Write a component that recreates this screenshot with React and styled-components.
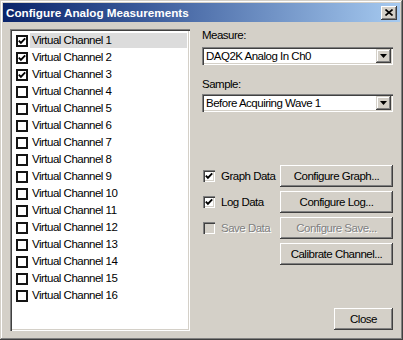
import React from 'react';
import styled, { createGlobalStyle } from 'styled-components';

const Global = createGlobalStyle`
  html, body { margin: 0; padding: 0; background: #d4d0c8; }
  body {
    font-family: "Liberation Sans", Arial, sans-serif;
    font-size: 11.5px;
    letter-spacing: -0.5px;
    color: #000;
  }
  * { box-sizing: border-box; }
`;

const Window = styled.div`
  width: 403px;
  height: 340px;
  background: #d4d0c8;
  padding: 3px;
  display: flex;
  flex-direction: column;
  box-shadow: inset -1px -1px #404040, inset 1px 1px #d4d0c8,
    inset -2px -2px #808080, inset 2px 2px #ffffff;
`;

const TitleBar = styled.div`
  height: 19px;
  flex: none;
  display: flex;
  align-items: center;
  justify-content: space-between;
  padding: 0 3px 0 3px;
  background: linear-gradient(to right, #0a246a 0%, #3a5a9a 35%, #a6caf0 100%);
  color: #fff;
  font-weight: bold;
  font-size: 11.7px;
  letter-spacing: 0;
`;

const TitleText = styled.span`
  white-space: nowrap;
`;

const TitleButton = styled.div`
  width: 16px;
  height: 14px;
  background: #d4d0c8;
  display: flex;
  align-items: center;
  justify-content: center;
  box-shadow: inset -1px -1px #404040, inset 1px 1px #ffffff,
    inset -2px -2px #808080, inset 2px 2px #d4d0c8;
`;

const Body = styled.div`
  flex: 1;
  display: flex;
  gap: 12px;
  padding: 7px 7px 6px 7px;
  min-height: 0;
`;

const ListBox = styled.div`
  width: 180px;
  flex: none;
  background: #fff;
  padding: 3px 3px 2px 4px;
  display: flex;
  flex-direction: column;
  box-shadow: inset 1px 1px #808080, inset 2px 2px #404040,
    inset -1px -1px #ffffff, inset -2px -2px #d4d0c8;
`;

const ListRow = styled.div`
  height: 17px;
  flex: none;
  display: flex;
  align-items: center;
`;

const FlatBox = styled.div`
  width: 12px;
  height: 12px;
  flex: none;
  margin-left: 2px;
  border: 2px solid #141414;
  background: #fff;
  display: flex;
  align-items: center;
  justify-content: center;
`;

const RowLabel = styled.div`
  flex: 1;
  height: 15px;
  line-height: 15px;
  margin-left: 2px;
  padding-left: 2px;
  white-space: nowrap;
  background: ${(p) => (p.$selected ? '#dcdcdc' : 'transparent')};
`;

const Side = styled.div`
  flex: 1;
  display: flex;
  flex-direction: column;
  padding-bottom: 1px;
`;

const FieldLabel = styled.div`
  height: 13px;
  line-height: 13px;
  margin-top: ${(p) => p.$top}px;
`;

const Select = styled.div`
  height: 18px;
  margin-top: ${(p) => p.$top}px;
  background: #fff;
  padding: 2px;
  display: flex;
  align-items: center;
  box-shadow: inset 1px 1px #808080, inset 2px 2px #404040,
    inset -1px -1px #ffffff, inset -2px -2px #d4d0c8;
`;

const SelectValue = styled.div`
  flex: 1;
  padding-left: 2px;
  white-space: nowrap;
  line-height: 14px;
`;

const ArrowButton = styled.div`
  width: 15px;
  height: 14px;
  background: #d4d0c8;
  display: flex;
  align-items: center;
  justify-content: center;
  box-shadow: inset -1px -1px #404040, inset 1px 1px #d4d0c8,
    inset -2px -2px #808080, inset 2px 2px #ffffff;
`;

const Actions = styled.div`
  margin-top: 53px;
  display: flex;
  flex-direction: column;
  gap: 4px;
`;

const ActionRow = styled.div`
  height: 22px;
  display: flex;
  align-items: center;
`;

const SunkenBox = styled.div`
  width: 12px;
  height: 12px;
  flex: none;
  margin-left: 1px;
  background: ${(p) => (p.$disabled ? '#d4d0c8' : '#fff')};
  display: flex;
  align-items: center;
  justify-content: center;
  box-shadow: inset 1px 1px #808080, inset 2px 2px #404040,
    inset -1px -1px #ffffff, inset -2px -2px #d4d0c8;
`;

const CheckLabel = styled.div`
  margin-left: 6px;
  white-space: nowrap;
  color: ${(p) => (p.$disabled ? '#808080' : '#000')};
  text-shadow: ${(p) => (p.$disabled ? '1px 1px #ffffff' : 'none')};
`;

const Button = styled.div`
  width: ${(p) => p.$w}px;
  height: 22px;
  margin-left: auto;
  display: flex;
  align-items: center;
  justify-content: center;
  white-space: nowrap;
  background: #d4d0c8;
  color: ${(p) => (p.$disabled ? '#808080' : '#000')};
  text-shadow: ${(p) => (p.$disabled ? '1px 1px #ffffff' : 'none')};
  box-shadow: inset -1px -1px #404040, inset 1px 1px #ffffff,
    inset -2px -2px #808080, inset 2px 2px #d4d0c8;
`;

const Footer = styled.div`
  margin-top: auto;
  display: flex;
`;

const Tick = () => (
  <svg width="8" height="8" viewBox="0 0 8 8">
    <polyline points="0.8,3.6 2.9,5.8 7.2,1.4" fill="none" stroke="#000" strokeWidth="1.9" />
  </svg>
);

const DownArrow = () => (
  <svg width="7" height="4" viewBox="0 0 7 4">
    <polygon points="0,0 7,0 3.5,4" fill="#000" />
  </svg>
);

const CloseX = () => (
  <svg width="8" height="7" viewBox="0 0 8 7">
    <path d="M0.5 0.5 L7.5 6.5 M7.5 0.5 L0.5 6.5" stroke="#000" strokeWidth="1.6" />
  </svg>
);

const channels = Array.from({ length: 16 }, (_, i) => ({
  name: `Virtual Channel ${i + 1}`,
  checked: i < 3,
}));

const actions = [
  { label: 'Graph Data', checked: true, button: 'Configure Graph...' },
  { label: 'Log Data', checked: true, button: 'Configure Log...' },
  { label: 'Save Data', checked: false, disabled: true, button: 'Configure Save...' },
  { button: 'Calibrate Channel...' },
];

export default function App() {
  return (
    <>
      <Global />
      <Window>
        <TitleBar>
          <TitleText>Configure Analog Measurements</TitleText>
          <TitleButton>
            <CloseX />
          </TitleButton>
        </TitleBar>
        <Body>
          <ListBox>
            {channels.map((c, i) => (
              <ListRow key={c.name}>
                <FlatBox>{c.checked && <Tick />}</FlatBox>
                <RowLabel $selected={i === 0}>{c.name}</RowLabel>
              </ListRow>
            ))}
          </ListBox>
          <Side>
            <FieldLabel $top={0}>Measure:</FieldLabel>
            <Select $top={5}>
              <SelectValue>DAQ2K Analog In Ch0</SelectValue>
              <ArrowButton>
                <DownArrow />
              </ArrowButton>
            </Select>
            <FieldLabel $top={13}>Sample:</FieldLabel>
            <Select $top={3}>
              <SelectValue>Before Acquiring Wave 1</SelectValue>
              <ArrowButton>
                <DownArrow />
              </ArrowButton>
            </Select>
            <Actions>
              {actions.map((a) => (
                <ActionRow key={a.button}>
                  {a.label && (
                    <>
                      <SunkenBox $disabled={a.disabled}>{a.checked && <Tick />}</SunkenBox>
                      <CheckLabel $disabled={a.disabled}>{a.label}</CheckLabel>
                    </>
                  )}
                  <Button $w={113} $disabled={a.disabled}>
                    {a.button}
                  </Button>
                </ActionRow>
              ))}
            </Actions>
            <Footer>
              <Button $w={59}>Close</Button>
            </Footer>
          </Side>
        </Body>
      </Window>
    </>
  );
}
